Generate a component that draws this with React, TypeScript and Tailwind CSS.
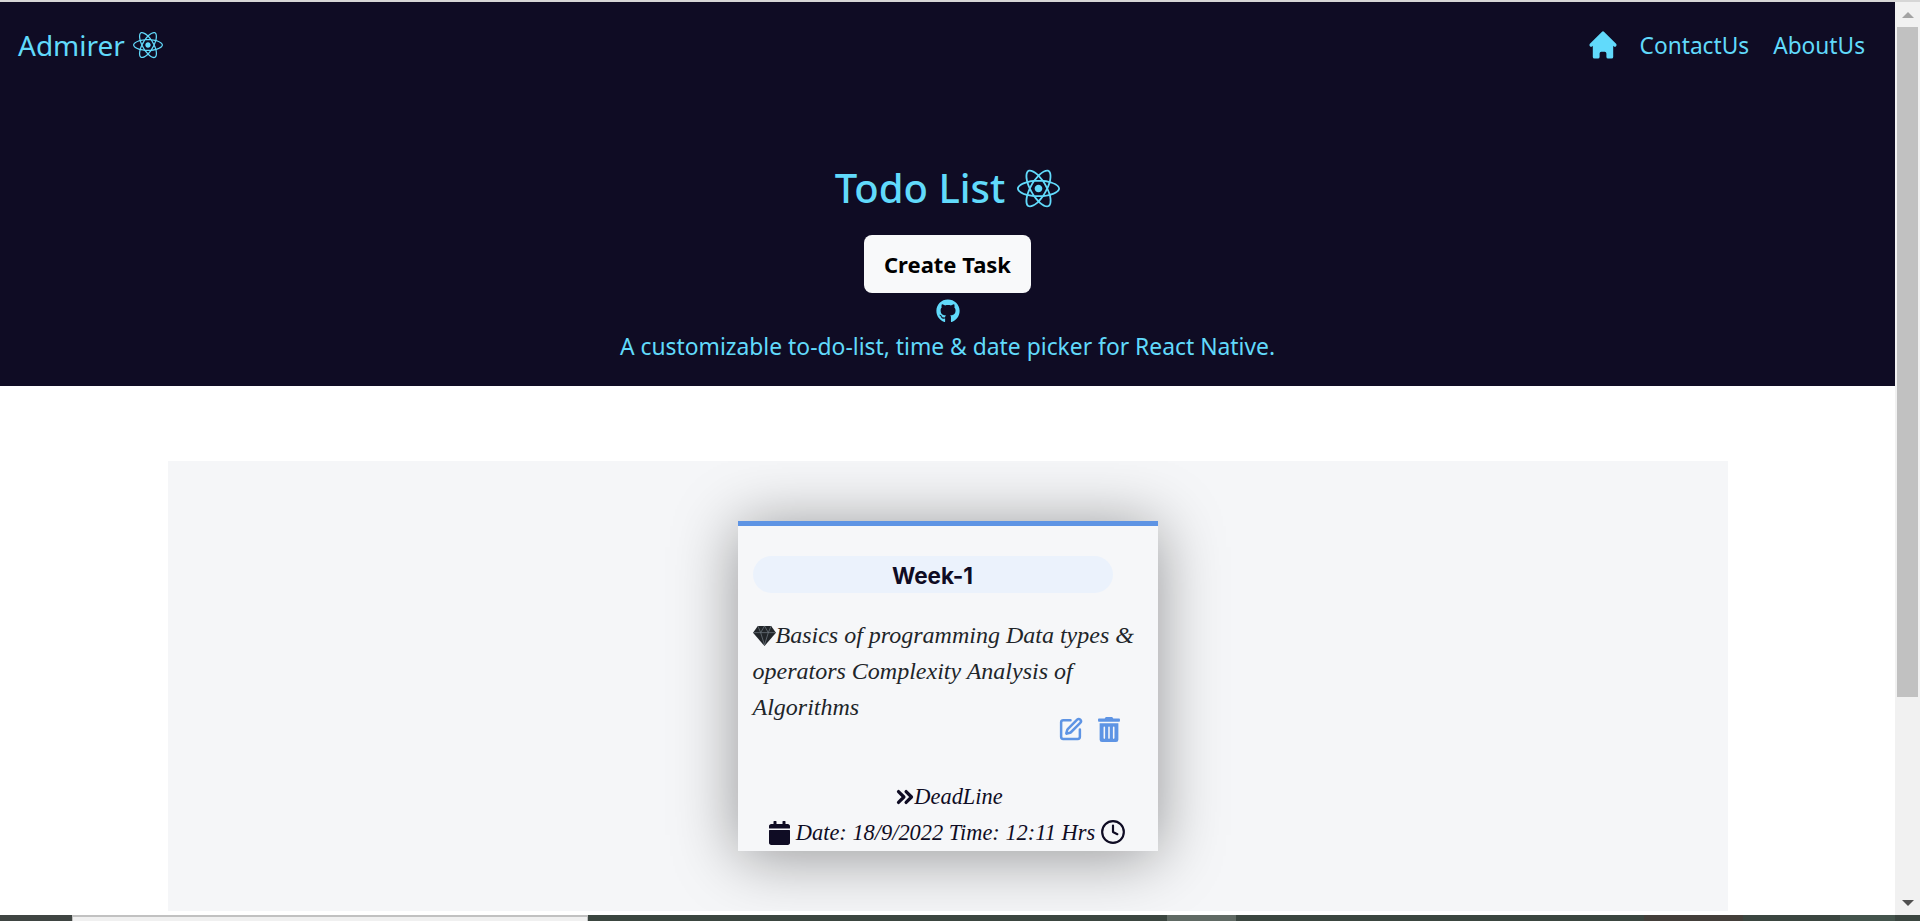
import { FaReact, FaGithub, FaTrashAlt, FaCalendar } from 'react-icons/fa';
import { HiHome } from 'react-icons/hi';
import { SquarePen, ChevronsRight, Clock } from 'lucide-react';

const SketchGem = () => (
  <svg viewBox="0 0 24 22" className="inline-block align-[-3px] w-[23px] h-[21px]">
    <path d="M5 1h14l5 7-12 14L0 8z" fill="#212529" />
    <path d="M1 8h22M5 1l3 7 4-7 4 7 3-7M8 8l4 13 4-13" fill="none" stroke="#6c757d" strokeWidth="0.8" />
  </svg>
);

const App = () => {
  return (
    <div className="h-[921px] overflow-hidden flex flex-col bg-white font-['Noto_Sans',sans-serif]">
      <div className="h-[2px] bg-[#d6d6d6]" />

      <div className="flex flex-1 min-h-0">
        <div className="flex-1 overflow-hidden">
          <header className="h-[384px] bg-[#0f0c24] text-[#61dafb] flex flex-col">
            <nav className="flex items-center justify-between h-[86px] pl-[18px] pr-[30px]">
              <div className="flex items-center gap-[8px] text-[28px]">
                <span>Admirer</span>
                <FaReact className="w-[30px] h-[30px]" />
              </div>
              <div className="flex items-center text-[22.7px]">
                <HiHome className="w-[34px] h-[34px] mr-[20px]" />
                <span className="mr-[24px] pt-[2px]">ContactUs</span>
                <span className="pt-[2px]">AboutUs</span>
              </div>
            </nav>

            <div className="flex flex-col items-center">
              <h1 className="mt-[70px] flex items-center gap-[12px] text-[40px] leading-[60px] font-medium">
                Todo List
                <FaReact className="w-[43px] h-[43px]" />
              </h1>
              <button className="mt-[17px] w-[167px] h-[58px] rounded-[8px] bg-[#f8f9fa] text-black text-[22px] font-bold">
                Create Task
              </button>
              <FaGithub className="mt-[6px] w-[24px] h-[24px]" />
              <p className="mt-[9px] text-[22.85px] leading-[30px]">
                A customizable to-do-list, time &amp; date picker for React Native.
              </p>
            </div>
          </header>

          <section className="mt-[75px] mx-auto w-[1560px] h-[450px] pt-[60px] bg-[#f5f6f8] overflow-hidden">
            <div className="mx-auto w-[420px] h-[330px] border-t-[5px] border-[#5e94e4] bg-[#f6f7f9] shadow-[0_5px_60px_rgba(0,0,0,0.4)] flex flex-col">
              <div className="mt-[30px] ml-[15px] w-[360px] h-[38px] pt-[3px] rounded-[19px] bg-[#ebf2fc] text-[#0f0c24] flex items-center justify-center text-[22.5px] font-bold font-['Inter',sans-serif]">
                Week-1
              </div>

              <p className="mt-[24px] px-[15px] text-[24px] leading-[36px] italic text-[#212529] font-['Liberation_Serif',serif]">
                <SketchGem />
                Basics of programming Data types &amp; operators Complexity Analysis of Algorithms
              </p>

              <div className="-mt-[8px] pr-[38px] flex justify-end items-center gap-[15px] text-[#5e94e4]">
                <SquarePen className="w-[25px] h-[25px]" strokeWidth={2.4} />
                <FaTrashAlt className="w-[22px] h-[25px]" />
              </div>

              <div className="mt-[37px] flex flex-col items-center text-[#0f0c24] text-[22.4px] leading-[36px] italic font-['Liberation_Serif',serif]">
                <div className="flex items-center">
                  <ChevronsRight className="w-[26px] h-[26px] -mr-[4px]" strokeWidth={3} />
                  DeadLine
                </div>
                <div className="flex items-center gap-[6px]">
                  <FaCalendar className="w-[21px] h-[24px]" />
                  <span>Date: 18/9/2022 Time: 12:11 Hrs</span>
                  <Clock className="w-[26px] h-[26px] -ml-[1px] -mt-[3px]" strokeWidth={2} />
                </div>
              </div>
            </div>
          </section>
        </div>

        <div className="w-[25px] bg-[#f1f1f1] flex flex-col items-center">
          <div className="h-[25px] flex items-center justify-center">
            <div className="w-0 h-0 border-x-[6px] border-x-transparent border-b-[6px] border-b-[#a3a3a3]" />
          </div>
          <div className="w-[21px] h-[670px] bg-[#c1c1c1]" />
          <div className="flex-1 flex items-end justify-center pb-[9px]">
            <div className="w-0 h-0 border-x-[6px] border-x-transparent border-t-[6px] border-t-[#505050]" />
          </div>
        </div>
      </div>

      <div className="h-[6px] flex bg-[#3b4640]">
        <div className="w-[72px] bg-[#3f4542]" />
        <div className="w-[516px] bg-[#f0f0f0] border-t-2 border-x border-[#c1c1c1]" />
        <div className="w-[579px]" />
        <div className="w-[69px] bg-[#606a64]" />
        <div className="w-[408px]" />
        <div className="w-[99px] bg-[#443f3a]" />
        <div className="w-[97px]" />
        <div className="w-[55px] bg-[#44544c]" />
      </div>
    </div>
  );
};

export default App;
